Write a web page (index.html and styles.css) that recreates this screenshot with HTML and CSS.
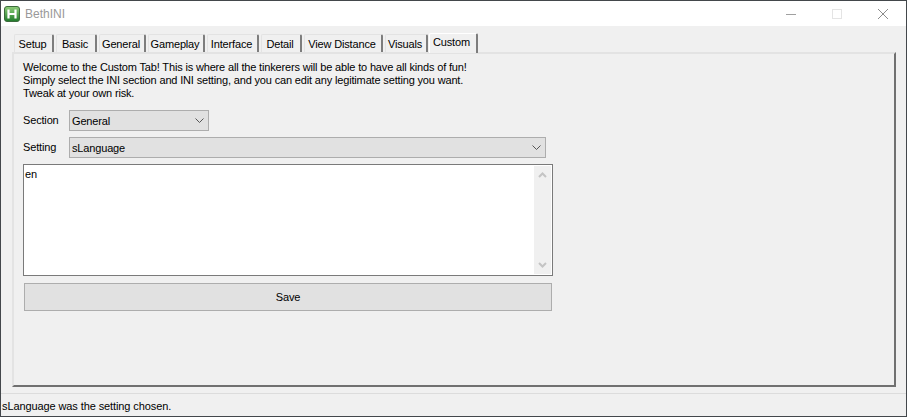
FILE: index.html
```html
<!DOCTYPE html>
<html lang="en">
<head>
<meta charset="utf-8">
<title>BethINI</title>
<link rel="stylesheet" href="styles.css">
</head>
<body>
<div class="window">
  <header class="titlebar">
    <svg class="app-icon" viewBox="0 0 16 16" width="16" height="16">
      <defs><linearGradient id="g" x1="0" y1="0" x2="0" y2="1"><stop offset="0" stop-color="#8fce7a"/><stop offset="1" stop-color="#1f7a2a"/></linearGradient></defs>
      <rect x="0.5" y="0.5" width="15" height="15" rx="2.5" fill="url(#g)" stroke="#3c6b3c"/>
      <path d="M4.5 3.5v9M11.5 3.5v9M4.5 8h7" fill="none" stroke="#fff" stroke-width="2.2"/>
    </svg>
    <span class="app-title">BethINI</span>
    <div class="controls">
      <svg class="ctl" viewBox="0 0 46 26" width="46" height="26"><path d="M18 13.5h10" stroke="#a0a0a0" fill="none"/></svg>
      <svg class="ctl" viewBox="0 0 46 26" width="46" height="26"><rect x="18.5" y="8.5" width="9" height="9" stroke="#e4e4e4" fill="none"/></svg>
      <svg class="ctl" viewBox="0 0 46 26" width="46" height="26"><path d="M18 8l10 10M28 8l-10 10" stroke="#8c8c8c" fill="none"/></svg>
    </div>
  </header>
  <main class="main">
    <nav class="tabs">
      <div class="tab w-setup">Setup</div>
      <div class="tab w-basic">Basic</div>
      <div class="tab w-general">General</div>
      <div class="tab w-gameplay">Gameplay</div>
      <div class="tab w-interface">Interface</div>
      <div class="tab w-detail">Detail</div>
      <div class="tab w-view">View Distance</div>
      <div class="tab w-visuals">Visuals</div>
      <div class="tab tab-active">Custom</div>
    </nav>
    <section class="panel">
      <p class="intro">Welcome to the Custom Tab! This is where all the tinkerers will be able to have all kinds of fun!<br>Simply select the INI section and INI setting, and you can edit any legitimate setting you want.<br>Tweak at your own risk.</p>
      <div class="field field-section">
        <label class="label">Section</label>
        <div class="combo combo-short"><span>General</span><svg viewBox="0 0 9 5" width="9" height="5"><path d="M0.5 0.5l4 4 4-4" fill="none" stroke="#555"/></svg></div>
      </div>
      <div class="field field-setting">
        <label class="label">Setting</label>
        <div class="combo combo-long"><span>sLanguage</span><svg viewBox="0 0 9 5" width="9" height="5"><path d="M0.5 0.5l4 4 4-4" fill="none" stroke="#555"/></svg></div>
      </div>
      <div class="editor">
        <div class="editor-text">en</div>
        <div class="scrollbar">
          <svg viewBox="0 0 9 6" width="9" height="6"><path d="M1 5l3.5-3.5L8 5" fill="none" stroke="#c4c4c4" stroke-width="2"/></svg>
          <svg viewBox="0 0 9 6" width="9" height="6"><path d="M1 1l3.5 3.5L8 1" fill="none" stroke="#c4c4c4" stroke-width="2"/></svg>
        </div>
      </div>
      <button class="save" type="button">Save</button>
    </section>
  </main>
  <footer class="status">sLanguage was the setting chosen.</footer>
</div>
</body>
</html>
```

FILE: styles.css
```css
* { box-sizing: border-box; }
html, body { margin: 0; height: 100%; }
body { font-family: "Liberation Sans", Arial, sans-serif; font-size: 11px; letter-spacing: -0.16px; color: #000; background: #f0f0f0; }
.window { width: 907px; height: 417px; border: 1px solid #43474b; display: flex; flex-direction: column; background: #f0f0f0; overflow: hidden; }
.titlebar { height: 25px; flex: none; background: #fff; display: flex; align-items: center; padding-left: 3px; }
.app-icon { flex: none; }
.app-title { margin-left: 5px; font-size: 12px; letter-spacing: 0; color: #999; }
.controls { margin-left: auto; display: flex; margin-right: 0; }
.ctl { display: block; }
.main { flex: 1; display: flex; flex-direction: column; padding: 6px 10px 6px 11px; min-height: 0; }
.tabs { display: flex; gap: 2px; height: 20px; padding-left: 2px; align-items: flex-end; position: relative; z-index: 1; }
.tab { height: 18px; line-height: 18px; padding-right: 2px; text-align: center; background: #f0f0f0; border-top: 1px solid #e3e3e3; border-left: 1px solid #e3e3e3; border-right: 2px solid #7d7d7d; border-radius: 2px 2px 0 0; }
.w-setup { width: 40px; }
.w-basic { width: 41px; }
.w-general { width: 47px; }
.w-gameplay { width: 57px; }
.w-interface { width: 52px; }
.w-detail { width: 41px; }
.w-view { width: 79px; }
.w-visuals { width: 43px; }
.tab-active { width: 49px; height: 20px; margin-left: -1px; padding-right: 3px; line-height: 17px; border-top-color: #fff; border-left-color: #fff; margin-bottom: -1px; }
.panel { flex: 1; border: 2px solid #707070; border-top: 2px solid #e3e3e3; border-left: 2px solid #e3e3e3; padding: 7px 0 0 9px; }
.intro { margin: 0; line-height: 13px; }
.field { display: flex; align-items: center; }
.field-section { margin-top: 10px; }
.field-setting { margin-top: 6px; }
.label { width: 46px; flex: none; margin-top: -2px; }
.combo { height: 21px; background: #e1e1e1; border: 1px solid #adadad; display: flex; align-items: center; justify-content: space-between; padding: 0 4px 0 2px; }
.combo-short { width: 140px; }
.combo-long { width: 477px; }
.editor { margin-top: 6px; width: 530px; height: 112px; background: #fff; border: 1px solid #7a7a7a; display: flex; justify-content: space-between; padding: 1px; }
.editor-text { padding: 2px 0 0 0; }
.scrollbar { width: 17px; background: #f0f0f0; display: flex; flex-direction: column; justify-content: space-between; align-items: center; padding: 6px 0; }
.save { display: block; margin: 7px 0 0 1px; width: 528px; height: 28px; background: #e1e1e1; border: 1px solid #adadad; font: inherit; letter-spacing: inherit; color: #000; padding: 0; }
.status { height: 23px; flex: none; border-top: 1px solid #dcdcdc; padding: 6px 0 0 1px; line-height: 13px; letter-spacing: -0.1px; }
```
